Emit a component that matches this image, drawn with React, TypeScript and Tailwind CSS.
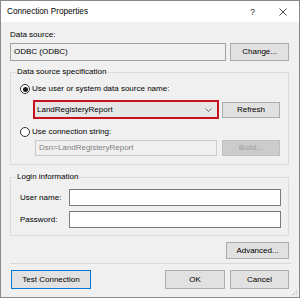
import React from 'react';

const Btn: React.FC<{ label: string; className?: string; disabled?: boolean; focused?: boolean }> = ({ label, className = '', disabled, focused }) => (
    <button
        className={`flex items-center justify-center border ${
            disabled
                ? 'bg-[#cccccc] border-[#bfbfbf] text-[#9d9d9d]'
                : focused
                ? 'bg-[#e1e1e1] border-[#0078d7] text-black'
                : 'bg-[#e1e1e1] border-[#adadad] text-black'
        } ${className}`}
    >
        {label}
    </button>
);

const Radio: React.FC<{ checked?: boolean }> = ({ checked }) => (
    <span className="w-[10px] h-[10px] rounded-full border border-[#333333] bg-white flex items-center justify-center shrink-0">
        {checked && <span className="w-[5px] h-[5px] rounded-full bg-[#1a1a1a]" />}
    </span>
);

export default function App() {
    return (
        <div
            className="relative w-[300px] h-[298px] border border-[#8a8a8a] bg-[#f0f0f0] flex flex-col text-[8px] leading-[10px] text-black"
            style={{ fontFamily: '"Liberation Sans", Arial, sans-serif' }}
        >
            {/* title bar */}
            <div className="h-[21px] bg-white flex items-center pl-[6px] shrink-0">
                <span className="text-[8.2px]">Connection Properties</span>
                <span className="ml-auto text-[9px] text-[#222]">?</span>
                <svg className="ml-[24px] mr-[12px]" width="8" height="8" viewBox="0 0 8 8">
                    <path d="M0.5 0.5L7.5 7.5M7.5 0.5L0.5 7.5" stroke="#333" strokeWidth="0.9" fill="none" />
                </svg>
            </div>

            <div className="flex-1 flex flex-col pl-[9px] pr-[10px]">
                <div className="mt-[8px] h-[10px]">Data source:</div>
                <div className="mt-[3px] flex items-start">
                    <div className="w-[217px] h-[18px] border border-[#a3a3a3] bg-[#f0f0f0] flex items-center pl-[3px]">ODBC (ODBC)</div>
                    <Btn label="Change..." className="ml-[4px] w-[59px] h-[18px]" />
                </div>

                {/* data source specification */}
                <div className="relative mt-[11px] w-[279px] h-[93px] border border-[#dcdcdc] flex flex-col">
                    <span className="absolute -top-[6px] left-[5px] px-[1px] bg-[#f0f0f0]">Data source specification</span>
                    <div className="mt-[11px] pl-[9px] h-[10px] flex items-center">
                        <Radio checked />
                        <span className="ml-[2px]">Use user or system data source name:</span>
                    </div>
                    <div className="mt-[6px] ml-[22px] flex items-center">
                        <div className="w-[186px] h-[19px] border-2 border-[#c8101e] bg-[#e6e6e6] flex items-center pl-[2px] pr-[5px]">
                            <span>LandRegisteryReport</span>
                            <svg className="ml-auto" width="7" height="4" viewBox="0 0 7 4">
                                <path d="M0.5 0.5L3.5 3.5L6.5 0.5" stroke="#606060" strokeWidth="0.9" fill="none" />
                            </svg>
                        </div>
                        <Btn label="Refresh" className="ml-[3px] w-[58px] h-[16px]" />
                    </div>
                    <div className="mt-[8px] pl-[9px] h-[10px] flex items-center">
                        <Radio />
                        <span className="ml-[2px]">Use connection string:</span>
                    </div>
                    <div className="mt-[3px] ml-[24px] flex items-center">
                        <div className="w-[182px] h-[16px] border border-[#cccccc] bg-[#f0f0f0] flex items-center pl-[3px] text-[#808080]">
                            Dsn=LandRegisteryReport
                        </div>
                        <Btn label="Build..." disabled className="ml-[5px] w-[58px] h-[16px]" />
                    </div>
                </div>

                {/* login information */}
                <div className="relative mt-[12px] w-[279px] h-[59px] border border-[#dcdcdc] flex flex-col">
                    <span className="absolute -top-[6px] left-[5px] px-[1px] bg-[#f0f0f0]">Login information</span>
                    <div className="mt-[11px] pl-[9px] flex items-center">
                        <span className="w-[49px]">User name:</span>
                        <div className="w-[212px] h-[17px] border border-[#7a7a7a] bg-white" />
                    </div>
                    <div className="mt-[5px] pl-[9px] flex items-center">
                        <span className="w-[49px]">Password:</span>
                        <div className="w-[212px] h-[17px] border border-[#7a7a7a] bg-white" />
                    </div>
                </div>

                <div className="mt-[6px] flex justify-end">
                    <Btn label="Advanced..." className="w-[63px] h-[17px]" />
                </div>

                <div className="mt-[4px] h-px bg-[#d9d9d9] w-[281px]" />

                <div className="mt-[6px] flex items-center">
                    <Btn label="Test Connection" focused className="ml-[1px] w-[80px] h-[19px]" />
                    <Btn label="OK" className="ml-auto w-[60px] h-[19px]" />
                    <Btn label="Cancel" className="ml-[5px] w-[59px] h-[19px]" />
                </div>
            </div>

            {/* resize grip */}
            <svg className="absolute right-[1px] bottom-[1px]" width="6" height="6" viewBox="0 0 6 6">
                <rect x="4" y="0" width="1" height="1" fill="#b8b8b8" />
                <rect x="2" y="2" width="1" height="1" fill="#b8b8b8" />
                <rect x="4" y="2" width="1" height="1" fill="#b8b8b8" />
                <rect x="0" y="4" width="1" height="1" fill="#b8b8b8" />
                <rect x="2" y="4" width="1" height="1" fill="#b8b8b8" />
                <rect x="4" y="4" width="1" height="1" fill="#b8b8b8" />
            </svg>
        </div>
    );
}
